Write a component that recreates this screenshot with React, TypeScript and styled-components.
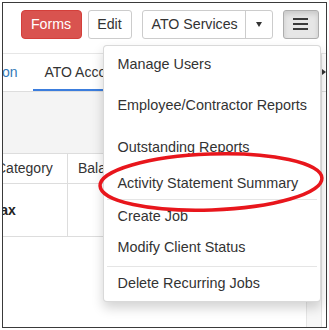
import React from "react";
import styled, { createGlobalStyle } from "styled-components";

const Global = createGlobalStyle`
  html, body { margin: 0; padding: 0; background: #fff; }
  body { font-family: "Liberation Sans", Arial, Helvetica, sans-serif; color: #333; font-size: 14px; }
  * { box-sizing: border-box; }
`;

const Page = styled.div`
  position: relative;
  width: 329px;
  height: 330px;
  padding: 2px;
  background: #fff;
  overflow: hidden;
`;

const Frame = styled.div`
  width: 325px;
  height: 326px;
  border: 1.5px solid #3a3a3a;
  display: flex;
  flex-direction: column;
  overflow: hidden;
  background: #fff;
`;

const Header = styled.header`
  height: 49.5px;
  flex: none;
  display: flex;
  align-items: flex-start;
  justify-content: flex-end;
  gap: 10px;
  padding: 6.5px 7.5px 0 0;
`;

const ButtonGroup = styled.div`
  display: flex;
  gap: 6px;
`;

const Btn = styled.button<{ $variant?: "danger" | "default" | "active"; $w: number }>`
  height: 29px;
  width: ${(p) => p.$w}px;
  padding: 0;
  margin: 0;
  font: 14.2px "Liberation Sans", Arial, sans-serif;
  border-radius: ${(p) => (p.$variant === "danger" ? 4 : 3)}px;
  display: inline-flex;
  align-items: center;
  justify-content: center;
  border: 1px solid
    ${(p) => (p.$variant === "danger" ? "#d43f3a" : p.$variant === "active" ? "#adadad" : "#ccc")};
  background: ${(p) => (p.$variant === "danger" ? "#d9534f" : p.$variant === "active" ? "#e6e6e6" : "#fff")};
  color: ${(p) => (p.$variant === "danger" ? "#fff" : "#333")};
  box-shadow: ${(p) => (p.$variant === "active" ? "inset 0 3px 5px rgba(0,0,0,.125)" : "none")};
`;

const Select = styled.div`
  display: flex;
  height: 29px;
  width: 131px;
  border: 1px solid #ccc;
  border-radius: 3px;
  background: #fff;
`;

const SelectLabel = styled.span`
  flex: 1;
  display: flex;
  align-items: center;
  padding-left: 9px;
  font-size: 14.2px;
  color: #333;
  white-space: nowrap;
`;

const SelectCaret = styled.span`
  width: 27px;
  border-left: 1px solid #ccc;
  display: flex;
  align-items: center;
  justify-content: center;
`;

const Caret = styled.span`
  width: 0;
  height: 0;
  border-left: 3.5px solid transparent;
  border-right: 3.5px solid transparent;
  border-top: 5px solid #333;
`;

const Workspace = styled.div`
  flex: 1;
  min-height: 0;
  display: flex;
  border-top: 1px solid #e6e6e6;
`;

const MainCol = styled.div`
  flex: 1;
  min-width: 0;
  display: flex;
  flex-direction: column;
  overflow: hidden;
`;

const TabBar = styled.nav`
  height: 38px;
  flex: none;
  display: flex;
  border-bottom: 1px solid #ddd;
  overflow: hidden;
`;

const TabList = styled.div`
  display: flex;
  gap: 3px;
  margin-left: -72.2px;
`;

const Tab = styled.span<{ $active?: boolean }>`
  display: flex;
  align-items: center;
  padding: 0 12px;
  white-space: nowrap;
  font-size: 14px;
  color: ${(p) => (p.$active ? "#333" : "#337ab7")};
  box-shadow: ${(p) => (p.$active ? "inset 0 -2px 0 #3b7ddd" : "none")};
`;

const Scroller = styled.div`
  flex: 1;
  min-height: 0;
  display: flex;
`;

const ScrollBody = styled.div`
  flex: 1;
  min-width: 0;
  overflow: hidden;
`;

const Band = styled.div`
  height: 61px;
  background: #f4f4f4;
`;

const Table = styled.div`
  margin-left: -17px;
  border-top: 1px solid #ddd;
`;

const TableRow = styled.div<{ $h: number }>`
  display: grid;
  grid-template-columns: 82px 110px 110px;
  height: ${(p) => p.$h}px;
  border-bottom: 1px solid #ddd;
`;

const HeadCell = styled.div`
  display: flex;
  align-items: center;
  padding-left: 10px;
  border-right: 1px solid #ddd;
  font-size: 14px;
  color: #333;
  white-space: nowrap;
`;

const BodyCell = styled.div`
  display: flex;
  align-items: center;
  padding-left: 6.7px;
  border-right: 1px solid #ddd;
  font-size: 14px;
  font-weight: bold;
  color: #222;
  white-space: nowrap;
`;

const Track = styled.div`
  width: 15px;
  flex: none;
  background: #f7f7f7;
  border-left: 1px solid #e6e6e6;
`;

const Side = styled.div`
  width: 5.5px;
  flex: none;
  border-left: 1px solid #e3e3e3;
`;

const SideArrow = styled.div`
  height: 38px;
  border-bottom: 1px solid #ddd;
  display: flex;
  align-items: center;
  justify-content: center;
`;

const ArrowGlyph = styled.span`
  width: 0;
  height: 0;
  border-top: 3px solid transparent;
  border-bottom: 3px solid transparent;
  border-left: 4px solid #333;
`;

const Menu = styled.ul`
  position: absolute;
  left: 103px;
  top: 45px;
  width: 218px;
  margin: 0;
  padding: 0 0 2px;
  list-style: none;
  background: #fff;
  border: 1px solid rgba(0, 0, 0, 0.15);
  border-radius: 4px;
  box-shadow: 0 6px 12px rgba(0, 0, 0, 0.175);
  z-index: 2;
`;

const MenuItem = styled.li<{ $h: number }>`
  height: ${(p) => p.$h}px;
  display: flex;
  align-items: center;
  padding: 0 0 0 13.5px;
  font-size: 14.4px;
  color: #333;
  white-space: nowrap;
`;

const MenuDivider = styled.li<{ $top: number }>`
  height: 1px;
  margin: ${(p) => p.$top}px 3px 0;
  background: #e5e5e5;
`;

const Annotation = styled.svg`
  position: absolute;
  left: 0;
  top: 0;
  width: 329px;
  height: 330px;
  pointer-events: none;
  z-index: 3;
`;

type Entry = { kind: "item"; label: string; h: number } | { kind: "divider"; top: number };

const entries: Entry[] = [
  { kind: "item", label: "Manage Users", h: 36 },
  { kind: "item", label: "Employee/Contractor Reports", h: 46 },
  { kind: "item", label: "Outstanding Reports", h: 38 },
  { kind: "item", label: "Activity Statement Summary", h: 33 },
  { kind: "divider", top: 0 },
  { kind: "item", label: "Create Job", h: 32 },
  { kind: "item", label: "Modify Client Status", h: 30 },
  { kind: "divider", top: 4 },
  { kind: "item", label: "Delete Recurring Jobs", h: 32 },
];

export default function App() {
  return (
    <>
      <Global />
      <Page>
        <Frame>
          <Header>
            <ButtonGroup>
              <Btn $variant="danger" $w={61}>Forms</Btn>
              <Btn $w={44}>Edit</Btn>
            </ButtonGroup>
            <Select>
              <SelectLabel>ATO Services</SelectLabel>
              <SelectCaret>
                <Caret />
              </SelectCaret>
            </Select>
            <Btn $variant="active" $w={36} aria-label="Menu">
              <svg width="15" height="12" viewBox="0 0 15 12">
                <rect x="0" y="0" width="15" height="2" fill="#3a3a3a" />
                <rect x="0" y="5" width="15" height="2" fill="#3a3a3a" />
                <rect x="0" y="10" width="15" height="2" fill="#3a3a3a" />
              </svg>
            </Btn>
          </Header>
          <Workspace>
            <MainCol>
              <TabBar>
                <TabList>
                  <Tab>Registration</Tab>
                  <Tab $active>ATO Account</Tab>
                  <Tab>Client Account</Tab>
                </TabList>
              </TabBar>
              <Scroller>
                <ScrollBody>
                  <Band />
                  <Table>
                    <TableRow $h={30}>
                      <HeadCell>Category</HeadCell>
                      <HeadCell>Balance</HeadCell>
                      <HeadCell>Due</HeadCell>
                    </TableRow>
                    <TableRow $h={53}>
                      <BodyCell>Tax</BodyCell>
                      <BodyCell />
                      <BodyCell />
                    </TableRow>
                  </Table>
                </ScrollBody>
                <Track />
              </Scroller>
            </MainCol>
            <Side>
              <SideArrow>
                <ArrowGlyph />
              </SideArrow>
            </Side>
          </Workspace>
        </Frame>
        <Menu>
          {entries.map((e, i) =>
            e.kind === "item" ? (
              <MenuItem key={i} $h={e.h}>
                {e.label}
              </MenuItem>
            ) : (
              <MenuDivider key={i} $top={e.top} />
            )
          )}
        </Menu>
        <Annotation viewBox="0 0 329 330" aria-hidden="true">
          <ellipse
            cx="211"
            cy="182"
            rx="111"
            ry="28"
            transform="rotate(-2 211 182)"
            fill="none"
            stroke="#e8161c"
            strokeWidth="3.5"
          />
        </Annotation>
      </Page>
    </>
  );
}
